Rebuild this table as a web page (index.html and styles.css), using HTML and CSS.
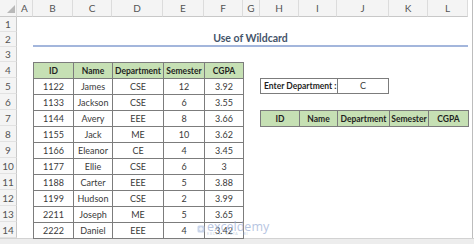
FILE: index.html
```html
<!DOCTYPE html>
<html>
<head>
<meta charset="utf-8">
<title>Use of Wildcard</title>
<link rel="stylesheet" href="styles.css">
</head>
<body>
<div class="sheet">
  <div class="col-head corner">
    <svg width="17" height="17" viewBox="0 0 17 17"><polygon points="15,5 15,13 7,13" fill="#b8b8b8"/></svg>
  </div>
  <div class="col-head">A</div>
  <div class="col-head">B</div>
  <div class="col-head">C</div>
  <div class="col-head">D</div>
  <div class="col-head">E</div>
  <div class="col-head">F</div>
  <div class="col-head">G</div>
  <div class="col-head">H</div>
  <div class="col-head">I</div>
  <div class="col-head">J</div>
  <div class="col-head">K</div>
  <div class="col-head">L</div>

  <div class="row-head">1</div>
  <div class="row-head">2</div>
  <div class="row-head">3</div>
  <div class="row-head">4</div>
  <div class="row-head">5</div>
  <div class="row-head">6</div>
  <div class="row-head">7</div>
  <div class="row-head">8</div>
  <div class="row-head">9</div>
  <div class="row-head">10</div>
  <div class="row-head">11</div>
  <div class="row-head">12</div>
  <div class="row-head">13</div>
  <div class="row-head">14</div>

  <div class="edge"></div>
  <div class="strip"></div>

  <div class="title">Use of Wildcard</div>

  <table class="data">
    <colgroup><col style="width:40px"><col style="width:39px"><col style="width:51px"><col style="width:41px"><col style="width:39px"></colgroup>
    <tr><th>ID</th><th>Name</th><th>Department</th><th>Semester</th><th>CGPA</th></tr>
    <tr><td>1122</td><td>James</td><td>CSE</td><td>12</td><td>3.92</td></tr>
    <tr><td>1133</td><td>Jackson</td><td>CSE</td><td>6</td><td>3.55</td></tr>
    <tr><td>1144</td><td>Avery</td><td>EEE</td><td>8</td><td>3.66</td></tr>
    <tr><td>1155</td><td>Jack</td><td>ME</td><td>10</td><td>3.62</td></tr>
    <tr><td>1166</td><td>Eleanor</td><td>CE</td><td>4</td><td>3.45</td></tr>
    <tr><td>1177</td><td>Ellie</td><td>CSE</td><td>6</td><td>3</td></tr>
    <tr><td>1188</td><td>Carter</td><td>EEE</td><td>5</td><td>3.88</td></tr>
    <tr><td>1199</td><td>Hudson</td><td>CSE</td><td>2</td><td>3.99</td></tr>
    <tr><td>2211</td><td>Joseph</td><td>ME</td><td>5</td><td>3.65</td></tr>
    <tr><td>2222</td><td>Daniel</td><td>EEE</td><td>4</td><td>3.42</td></tr>
  </table>

  <div class="lookup">
    <div class="lookup-label">Enter Department :</div>
    <div class="lookup-value">C</div>
  </div>

  <table class="result">
    <colgroup><col style="width:39px"><col style="width:38px"><col style="width:52px"><col style="width:39px"><col style="width:40px"></colgroup>
    <tr><th>ID</th><th>Name</th><th>Department</th><th>Semester</th><th>CGPA</th></tr>
  </table>

  <div class="watermark">
    <svg width="8" height="8" viewBox="0 0 8 8"><rect x="0.5" y="0.5" width="7" height="7" rx="1.5" fill="#b9c7e3"/><path d="M2 4h4M4 2v4" stroke="#fff" stroke-width="1"/></svg>
    <div class="brand">
      <span class="brand-name">exceldemy</span>
      <span class="brand-tag">EXCEL · DATA · BI</span>
    </div>
  </div>
</div>
</body>
</html>
```

FILE: styles.css
```css
* {
  box-sizing: border-box;
}

body {
  margin: 0;
  background: #fff;
  font-family: "Lato", "Open Sans", sans-serif;
}

/* worksheet: row header + columns A..L, then the window edge */
.sheet {
  position: relative;
  width: 474px;
  height: 244px;
  overflow: hidden;
  display: grid;
  grid-template-columns: 17px 16px 40px 39px 51px 41px 39px 17px 39px 38px 52px 39px 40px 5px 1fr;
  grid-template-rows: 17px 15px 15px 15px repeat(11, 16px) 1fr;
}

.col-head {
  background: #f4f4f4;
  border-right: 1px solid #dcdcdc;
  border-bottom: 1px solid #c8c8c8;
  color: #555;
  font-size: 10px;
  display: flex;
  align-items: center;
  justify-content: center;
}

.corner {
  display: block;
}

.corner svg {
  display: block;
}

.row-head {
  grid-column: 1;
  background: #f4f4f4;
  border-right: 1px solid #c8c8c8;
  border-bottom: 1px solid #e2e2e2;
  color: #555;
  font-size: 10px;
  display: flex;
  align-items: center;
  justify-content: center;
}

.edge {
  grid-column: 14;
  grid-row: 1 / 17;
  border-right: 1px solid #bdbdbd;
}

.strip {
  grid-column: 1 / -1;
  grid-row: 16;
  background: #ededed;
  border-top: 1px solid #d2d2d2;
}

.title {
  grid-column: 3 / 14;
  grid-row: 3;
  text-align: center;
  font-size: 10.5px;
  font-weight: 700;
  color: #44546a;
  line-height: 12px;
  border-bottom: 2px solid #a3b6dc;
}

table {
  border-collapse: collapse;
  table-layout: fixed;
}

th, td {
  border: 1px solid #7c7c7c;
  padding: 0;
  height: 16px;
  text-align: center;
  white-space: nowrap;
  overflow: hidden;
}

th {
  background: #c6e0b4;
  font-size: 8.5px;
  font-weight: 700;
  color: #1f1f1f;
}

td {
  font-size: 9px;
  color: #3a3a3a;
}

.data {
  grid-column: 3 / 8;
  grid-row: 5 / 16;
  width: 210px;
}

.result {
  grid-column: 9 / 14;
  grid-row: 8;
  width: 208px;
}

.lookup {
  grid-column: 9 / 12;
  grid-row: 6;
  display: grid;
  grid-template-columns: 77px 1fr;
  border: 1px solid #7c7c7c;
  font-size: 8.5px;
  white-space: nowrap;
}

.lookup-label {
  font-weight: 700;
  color: #1f1f1f;
  padding-left: 3px;
  line-height: 14px;
  border-right: 1px solid #7c7c7c;
}

.lookup-value {
  text-align: center;
  font-size: 9px;
  color: #3a3a3a;
  line-height: 14px;
}

.watermark {
  position: absolute;
  left: 197px;
  top: 221px;
  display: flex;
  align-items: center;
  gap: 2px;
  opacity: 0.75;
}

.brand {
  display: flex;
  flex-direction: column;
}

.brand-name {
  font-family: "Open Sans", sans-serif;
  font-size: 12.5px;
  line-height: 11px;
  color: #9fb2d8;
}

.brand-tag {
  font-size: 3.5px;
  letter-spacing: 0.8px;
  color: #b2bfd8;
}
```
